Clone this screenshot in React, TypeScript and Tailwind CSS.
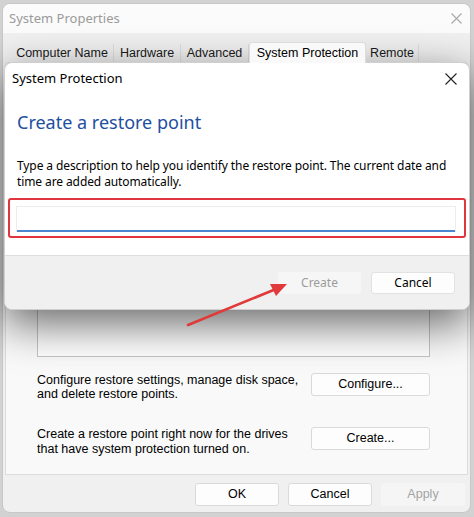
import React from 'react'

const ui = { fontFamily: '"Liberation Sans", Arial, sans-serif' }
const seg = { fontFamily: '"Noto Sans", "Open Sans", sans-serif' }

function Tab({ label, active, w }: { label: string; active?: boolean; w: string }) {
    return (
        <div
            className={
                active
                    ? `${w} h-[21px] bg-[#f9f9f9] border border-b-0 border-[#dcdcdc] rounded-t-[3px] flex items-center justify-center text-[12.5px] text-black -mb-px relative z-10`
                    : `${w} h-[18px] border-r border-[#dedede] flex items-center justify-center text-[12.5px] text-[#1a1a1a]`
            }
        >
            {label}
        </div>
    )
}

function WinButton({ label, disabled, w = 'w-[84px]' }: { label: string; disabled?: boolean; w?: string }) {
    return (
        <div
            className={`${w} h-[23px] rounded-[3px] flex items-center justify-center text-[12.5px] ${
                disabled ? 'bg-[#f5f5f5] text-[#a3a3a3]' : 'bg-[#fdfdfd] border border-[#dadada] text-black'
            }`}
        >
            {label}
        </div>
    )
}

export default function App() {
    return (
        <div className="w-[474px] h-[517px] bg-[#d2d2d2] relative overflow-hidden" style={ui}>
            {/* System Properties window */}
            <div className="ml-[2px] mt-[3px] w-[469px] h-[510px] rounded-lg bg-[#f0f0f0] border border-[#c8c8c8] flex flex-col overflow-hidden">
                <div className="h-[29px] bg-[#fbfbfb] flex items-center justify-between pl-[6px] pr-[8px]" style={seg}>
                    <span className="text-[13px] text-[#9a9a9a]">System Properties</span>
                    <svg width="11" height="11" viewBox="0 0 11 11" stroke="#a8a8a8" strokeWidth="1.1">
                        <path d="M0.5 0.5 L10.5 10.5 M10.5 0.5 L0.5 10.5" />
                    </svg>
                </div>
                <div className="h-[29px] flex items-end pl-[8px]">
                    <Tab label="Computer Name" w="w-[103px]" />
                    <Tab label="Hardware" w="w-[67px]" />
                    <Tab label="Advanced" w="w-[68px]" />
                    <Tab label="System Protection" w="w-[117px]" active />
                    <Tab label="Remote" w="w-[53px]" />
                </div>
                <div className="mx-[2px] h-[413px] bg-[#f9f9f9] border border-[#dcdcdc] rounded-t-[4px] flex flex-col pt-[138px] pl-[31px] pr-[37px]">
                    <div className="h-[156px] border border-[#c4c4c4] bg-white" />
                    <div className="mt-[16px] flex justify-between items-start">
                        <p className="text-[12.5px] leading-[14px] text-black">
                            Configure restore settings, manage disk space,
                            <br />
                            and delete restore points.
                        </p>
                        <WinButton label="Configure..." w="w-[119px]" />
                    </div>
                    <div className="mt-[26px] flex justify-between items-start">
                        <p className="text-[12.5px] leading-[15px] text-black">
                            Create a restore point right now for the drives
                            <br />
                            that have system protection turned on.
                        </p>
                        <WinButton label="Create..." w="w-[119px]" />
                    </div>
                </div>
                <div className="flex justify-end gap-[9px] pr-[5px] pt-[8px]">
                    <WinButton label="OK" />
                    <WinButton label="Cancel" />
                    <WinButton label="Apply" disabled />
                </div>
            </div>

            {/* System Protection dialog */}
            <div
                className="absolute left-[4px] top-[62px] w-[466px] h-[248px] rounded-lg bg-white border border-[#cfcfcf] shadow-[0_14px_44px_rgba(0,0,0,0.6)] flex flex-col overflow-hidden"
                style={seg}
            >
                <div className="h-[32px] flex items-center justify-between pl-[7px] pr-[12px]">
                    <span className="text-[13px] text-black">System Protection</span>
                    <svg width="12" height="12" viewBox="0 0 12 12" stroke="#222" strokeWidth="1.1">
                        <path d="M0.5 0.5 L11.5 11.5 M11.5 0.5 L0.5 11.5" />
                    </svg>
                </div>
                <div className="pl-[12px] pt-[14px] text-[18px] leading-[26px] text-[#1d4f9f]">Create a restore point</div>
                <p className="pl-[12px] pt-[23px] text-[12px] leading-[16px] text-black tracking-[-0.1px]">
                    Type a description to help you identify the restore point. The current date and
                    <br />
                    time are added automatically.
                </p>
                <div className="mx-[3px] mt-[8px] h-[40px] border-2 border-[#e0353f] rounded-[3px] pl-[6px] pr-[8px] pt-[6px]">
                    <div className="h-[26px] bg-white border border-b-0 border-[#ececec] flex flex-col justify-end">
                        <div className="h-[2px] bg-[#4a86d0]" />
                    </div>
                </div>
                <div className="mt-auto h-[54px] bg-[#f0f0f0] border-t border-[#dedede] flex justify-end items-start gap-[10px] pr-[14px] pt-[16px]">
                    <div className="w-[83px] h-[22px] bg-[#f6f6f6] rounded-[3px] flex items-center justify-center text-[12px] text-[#9c9c9c]">
                        Create
                    </div>
                    <div className="w-[84px] h-[22px] bg-[#fdfdfd] border border-[#e2e2e2] rounded-[3px] flex items-center justify-center text-[12px] text-black">
                        Cancel
                    </div>
                </div>
            </div>

            {/* annotation arrow */}
            <svg className="absolute left-0 top-0 pointer-events-none" width="474" height="517">
                <line x1="188" y1="325" x2="276" y2="289" stroke="#e03a3a" strokeWidth="2.6" strokeLinecap="round" />
                <polygon points="287,284 270,284 276,296" fill="#e03a3a" />
            </svg>
        </div>
    )
}
